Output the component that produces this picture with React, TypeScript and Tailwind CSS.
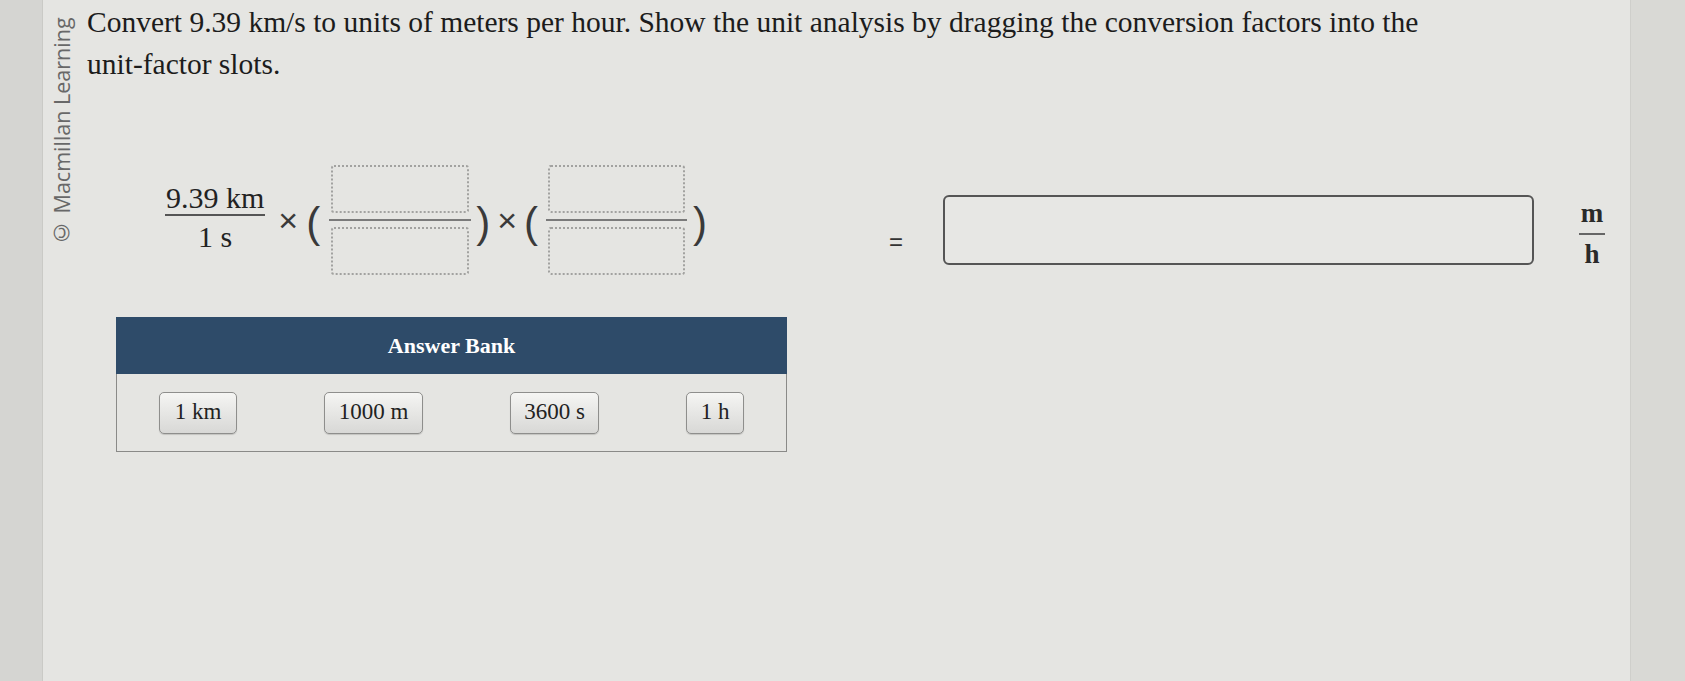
import { useState } from "react";

const serif = { fontFamily: '"Liberation Serif", "Times New Roman", serif' };
const sans = { fontFamily: '"Liberation Sans", Arial, sans-serif' };

const tiles = [
  { label: "1 km", w: "w-[78px]" },
  { label: "1000 m", w: "w-[99px]" },
  { label: "3600 s", w: "w-[89px]" },
  { label: "1 h", w: "w-[58px]" },
];

// one empty unit factor: numerator slot, bar, denominator slot
const FactorSlot = ({ box }: { box: string }) => (
  <div className="flex flex-col items-center">
    <div className={`h-[48px] ${box} border-2 border-dotted border-[#a2a2a0] rounded-[3px]`} />
    <div className="mt-[6px] h-[2px] w-full bg-[#7a7a7a]" />
    <div className={`mt-[6px] h-[48px] ${box} border-2 border-dotted border-[#a2a2a0] rounded-[3px]`} />
  </div>
);

const Glyph = ({ ch, size, ml, pt = "" }: { ch: string; size: string; ml: string; pt?: string }) => (
  <div className={`h-[110px] flex items-center ${ml} ${pt}`}>
    <span className={`${size} leading-none text-[#3a3a3a]`} style={sans}>
      {ch}
    </span>
  </div>
);

export default function App() {
  const [answer] = useState("");

  return (
    <div className="flex w-full h-screen bg-[#e5e5e2] overflow-hidden">
      {/* left edge of the page */}
      <div className="w-[43px] bg-[#d5d5d2] border-r border-[#cacac6]" />

      <div className="flex flex-1">
        {/* copyright strip */}
        <div className="w-[44px] pl-[7px]">
          <div
            className="mt-[20px] h-[228px] leading-[24px] text-[21.5px] text-[#686868] [writing-mode:vertical-rl] rotate-180 whitespace-nowrap text-center"
            style={{ fontFamily: '"Open Sans", "Noto Sans", sans-serif' }}
          >
            © Macmillan Learning
          </div>
        </div>

        <div className="flex-1 flex flex-col">
          <p
            className="w-[1390px] pt-[1px] text-[29.5px] leading-[42px] text-[#1c1c1c]"
            style={serif}
          >
            Convert 9.39 km/s to units of meters per hour. Show the unit
            analysis by dragging the conversion factors into the unit-factor
            slots.
          </p>

          {/* equation */}
          <div className="mt-[80px] flex items-start h-[110px]">
            <div className="ml-[78px] mt-[18px] flex flex-col items-center text-[30px] text-[#222]" style={serif}>
              <div className="leading-[30px] px-[1px]">9.39 km</div>
              <div className="mt-[1px] h-[2px] w-full bg-[#555]" />
              <div className="mt-[6px] leading-[30px]">1 s</div>
            </div>
            <Glyph ch="×" size="text-[34px]" ml="ml-[13px]" />
            <Glyph ch="(" size="text-[42px]" ml="ml-[8px]" pt="pt-[6px]" />
            <div className="ml-[9px] w-[142px]">
              <FactorSlot box="w-[138px]" />
            </div>
            <Glyph ch=")" size="text-[42px]" ml="ml-[5px]" pt="pt-[6px]" />
            <Glyph ch="×" size="text-[34px]" ml="ml-[7px]" />
            <Glyph ch="(" size="text-[42px]" ml="ml-[7px]" pt="pt-[6px]" />
            <div className="ml-[8px] w-[141px]">
              <FactorSlot box="w-[137px]" />
            </div>
            <Glyph ch=")" size="text-[42px]" ml="ml-[6px]" pt="pt-[6px]" />

            <div className="ml-[182px] mt-[65px] text-[24px] leading-[24px] text-[#333]" style={sans}>
              =
            </div>
            <div className="ml-[40px] mt-[30px] h-[70px] w-[591px] border-2 border-[#555] rounded-[6px] bg-[#e7e7e4]">
              {answer}
            </div>
            <div className="ml-[45px] mt-[34px] flex flex-col items-center text-[27px] font-bold text-[#2a2a2a]" style={serif}>
              <div className="leading-[28px]">m</div>
              <div className="mt-[6px] h-[2px] w-[26px] bg-[#666]" />
              <div className="mt-[5px] leading-[28px]">h</div>
            </div>
          </div>

          {/* answer bank */}
          <div className="ml-[29px] mt-[42px] w-[671px]" style={serif}>
            <div className="h-[57px] bg-[#2e4b69] flex items-center justify-center text-[22px] font-bold text-white">
              Answer Bank
            </div>
            <div className="h-[78px] border border-t-0 border-[#8a8a88] flex items-center justify-between px-[42px]">
              {tiles.map((t) => (
                <div
                  key={t.label}
                  className={`${t.w} h-[42px] flex items-center justify-center rounded-[5px] border border-[#8e8e8c] bg-linear-to-b from-[#f5f5f3] to-[#d8d8d6] shadow-[0_1px_1px_rgba(0,0,0,0.15)] text-[23px] text-[#222] cursor-move`}
                >
                  {t.label}
                </div>
              ))}
            </div>
          </div>
        </div>
      </div>

      {/* right edge of the page */}
      <div className="w-[55px] bg-[#d9d9d5] border-l border-[#cfcfcb]" />
    </div>
  );
}
